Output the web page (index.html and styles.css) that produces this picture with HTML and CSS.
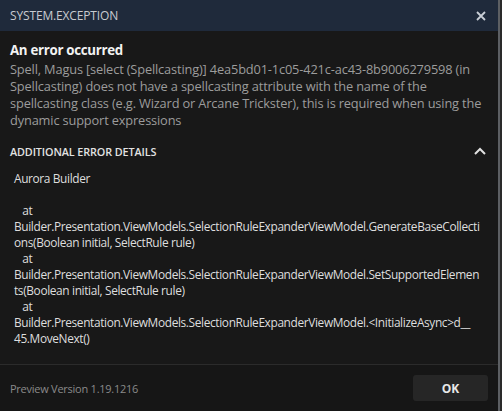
FILE: index.html
```html
<!DOCTYPE html>
<html>
<head>
<meta charset="utf-8">
<link rel="stylesheet" href="styles.css">
</head>
<body>
<div class="window">
  <div class="dialog">
    <div class="header">
      <span class="header-title">SYSTEM.EXCEPTION</span>
      <svg class="close" width="10" height="10" viewBox="0 0 10 10"><path d="M1 1 L9 9 M9 1 L1 9" stroke="#c9ced6" stroke-width="1.8" fill="none"/></svg>
    </div>
    <div class="content">
      <div class="title">An error occurred</div>
      <p class="message">Spell, Magus [select (Spellcasting)] 4ea5bd01-1c05-421c-ac43-8b9006279598 (in Spellcasting) does not have a spellcasting attribute with the name of the spellcasting class (e.g. Wizard or Arcane Trickster), this is required when using the dynamic support expressions</p>
      <div class="section-head">
        <span class="section-title">ADDITIONAL ERROR DETAILS</span>
        <svg class="chevron" width="12" height="8" viewBox="0 0 12 8"><path d="M1 7 L6 2 L11 7" stroke="#e0e0e0" stroke-width="2" fill="none"/></svg>
      </div>
      <div class="details">Aurora Builder

   at <span class="frame">Builder.Presentation.ViewModels.SelectionRuleExpanderViewModel.GenerateBaseCollections(Boolean initial, SelectRule rule)</span>
   at <span class="frame">Builder.Presentation.ViewModels.SelectionRuleExpanderViewModel.SetSupportedElements(Boolean initial, SelectRule rule)</span>
   at <span class="frame">Builder.Presentation.ViewModels.SelectionRuleExpanderViewModel.&lt;InitializeAsync&gt;d__<br>45.MoveNext()</span></div>
    </div>
    <div class="footer">
      <span class="version">Preview Version 1.19.1216</span>
      <button class="ok">OK</button>
    </div>
  </div>
  <div class="edge"></div>
</div>
</body>
</html>
```
FILE: styles.css
```css
html, body {
  margin: 0;
  padding: 0;
  background: #1a1a1a;
}
body {
  font-family: "Open Sans", "Noto Sans", sans-serif;
}
.window {
  display: flex;
  width: 502px;
  height: 411px;
  overflow: hidden;
}
.dialog {
  width: 498px;
  height: 411px;
  display: flex;
  flex-direction: column;
  background: #181818;
}
.edge {
  width: 2px;
  background: #5c5f63;
  border-right: 2px solid #2a2a2a;
}
.header {
  height: 31px;
  flex: none;
  background: #1f2a3b;
  display: flex;
  align-items: center;
  justify-content: space-between;
  padding: 0 12px 0 10px;
}
.header-title {
  color: #c8cbd0;
  font-size: 12px;
  letter-spacing: -0.15px;
}
.close {
  display: block;
}
.content {
  flex: 1;
  padding: 11px 10px 0 10px;
}
.title {
  color: #f2f2f2;
  font-weight: 700;
  font-size: 13.3px;
  line-height: 17px;
  letter-spacing: -0.3px;
}
.message {
  margin: 2px 0 0 0;
  color: #9c9c9c;
  font-size: 12.8px;
  line-height: 17px;
  letter-spacing: -0.15px;
}
.section-head {
  display: flex;
  align-items: center;
  justify-content: space-between;
  margin-top: 12px;
  height: 20px;
  padding-right: 2px;
}
.section-title {
  color: #e2e2e2;
  font-size: 10.8px;
  font-weight: 600;
  letter-spacing: -0.1px;
}
.chevron {
  display: block;
}
.details {
  margin: 9px 0 0 4px;
  color: #dedede;
  font-size: 11.9px;
  line-height: 16px;
  letter-spacing: -0.37px;
  white-space: pre-wrap;
  width: 467px;
}
.frame {
  display: inline-block;
  word-break: break-all;
  overflow-wrap: anywhere;
}
.footer {
  flex: none;
  height: 46px;
  border-top: 1px solid #2b2b2b;
  background: #161616;
  display: flex;
  align-items: center;
  justify-content: space-between;
  padding: 0 10px;
}
.version {
  color: #8a8a8a;
  font-size: 11px;
  letter-spacing: -0.25px;
}
.ok {
  width: 75px;
  height: 26px;
  border: none;
  border-radius: 3px;
  background: #262626;
  color: #e8e8e8;
  font-family: "Open Sans", "Noto Sans", sans-serif;
  font-weight: 700;
  font-size: 12px;
  padding: 0;
}
```
